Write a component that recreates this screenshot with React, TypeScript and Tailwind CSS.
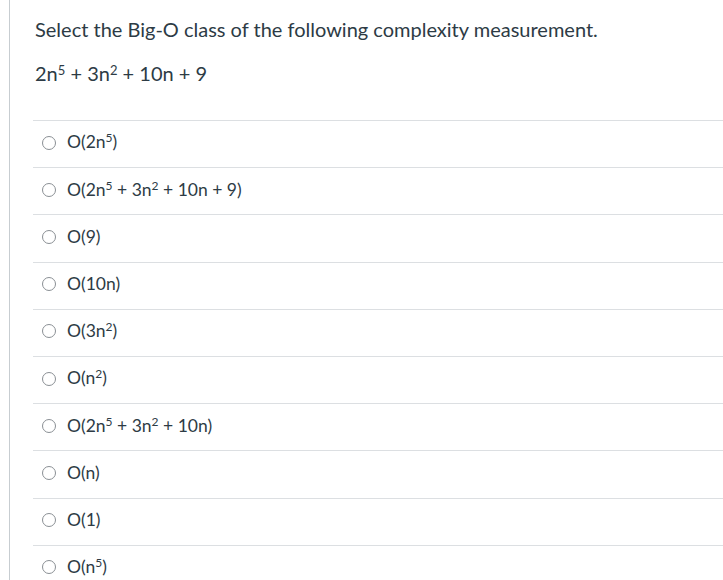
const options: { id: number; parts: (string | [string])[] }[] = [
  { id: 1, parts: ["O(2n", ["5"], ")"] },
  { id: 2, parts: ["O(2n", ["5"], " + 3n", ["2"], " + 10n + 9)"] },
  { id: 3, parts: ["O(9)"] },
  { id: 4, parts: ["O(10n)"] },
  { id: 5, parts: ["O(3n", ["2"], ")"] },
  { id: 6, parts: ["O(n", ["2"], ")"] },
  { id: 7, parts: ["O(2n", ["5"], " + 3n", ["2"], " + 10n)"] },
  { id: 8, parts: ["O(n)"] },
  { id: 9, parts: ["O(1)"] },
  { id: 10, parts: ["O(n", ["5"], ")"] },
];

function Label({ parts }: { parts: (string | [string])[] }) {
  return (
    <span>
      {parts.map((p, i) =>
        typeof p === "string" ? (
          <span key={i}>{p}</span>
        ) : (
          <sup key={i} className="text-[12px]">
            {p[0]}
          </sup>
        )
      )}
    </span>
  );
}

export default function App() {
  return (
    <div
      className="w-[723px] h-[580px] overflow-hidden bg-white text-[#2d3b45]"
      style={{ fontFamily: "Lato, 'Noto Sans', sans-serif" }}
    >
      <div className="ml-[9px] h-full border-l border-[#c7cdd1] pt-[14px]">
        <p className="pl-[25px] text-[20px] leading-[30px]">
          Select the Big-O class of the following complexity measurement.
        </p>
        <p className="pl-[25px] mt-[14px] text-[20px] leading-[30px]">
          2n<sup className="text-[13px]">5</sup> + 3n
          <sup className="text-[13px]">2</sup> + 10n + 9
        </p>
        <div className="ml-[23px] mt-[32px]">
          {options.map((o) => (
            <div
              key={o.id}
              className="h-[47.2px] border-t border-[#dcdfe2] flex items-center pl-[9px] pb-[3px] text-[17.5px]"
            >
              <span className="w-[14px] h-[14px] rounded-full border border-[#8a8f94] bg-white mr-[11px] shrink-0" />
              <Label parts={o.parts} />
            </div>
          ))}
        </div>
      </div>
    </div>
  );
}
